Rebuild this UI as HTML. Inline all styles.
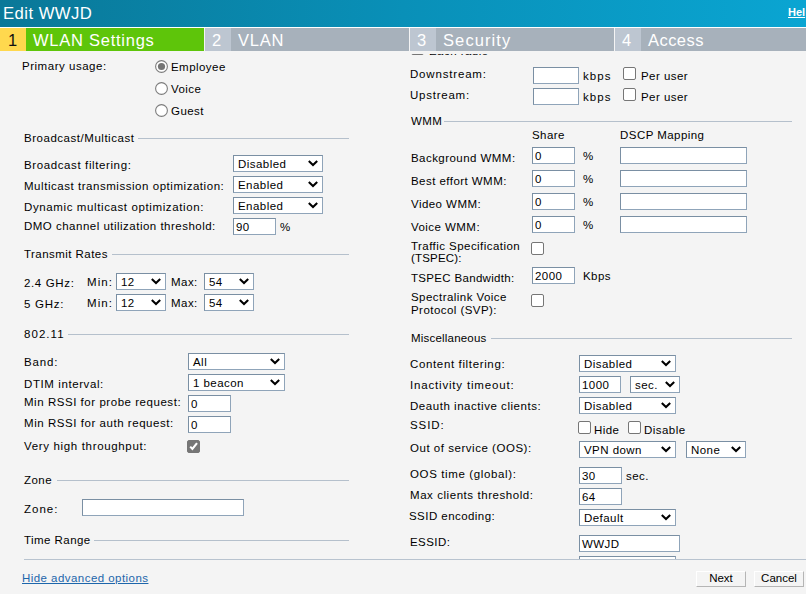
<!DOCTYPE html>
<html><head><meta charset="utf-8"><style>
*{margin:0;padding:0;box-sizing:border-box}
html,body{width:806px;height:594px;overflow:hidden;background:#f4f4f4;font-family:"Liberation Sans",sans-serif}
#hdr{position:absolute;left:0;top:0;width:806px;height:27px;background:linear-gradient(to right,#0a7898 0%,#0990b8 50%,#0aa5d2 100%)}
#hdr .ttl{position:absolute;left:3px;top:3px;font-size:16.7px;letter-spacing:0.45px;line-height:22px;color:#fff}
#hdr .help{position:absolute;left:788px;top:5px;font-size:11px;font-weight:bold;line-height:14px;color:#fff;text-decoration:underline}
#wline{position:absolute;left:0;top:27px;width:806px;height:1px;background:#fff}
.tab{position:absolute;top:28px;height:23px}
.tn{position:absolute;top:0;height:23px;width:26px}
.tl{position:absolute;top:0;height:23px;left:26px}
.tt{position:absolute;font-size:16.5px;letter-spacing:0.75px;line-height:22px;white-space:nowrap;color:#fff}
#content{position:absolute;left:0;top:54px;width:806px;height:505px;overflow:hidden}
#inner{position:absolute;left:0;top:-54px;width:806px;height:594px}
.t{position:absolute;font-size:11.5px;line-height:14px;color:#000;white-space:nowrap;letter-spacing:0.45px}
.sel,.inp{position:absolute;border:1px solid;border-color:#7a8fa3 #8fa4b9 #8fa4b9 #7a8fa3;background:#fff;overflow:hidden}
.sv{position:absolute;left:4px;top:1px;font-size:11.5px;line-height:14px;color:#000;white-space:nowrap;letter-spacing:0.45px}
.iv{position:absolute;left:2px;top:1px;font-size:11.5px;line-height:14px;color:#000;white-space:nowrap;letter-spacing:0.45px}
.chev{position:absolute;right:3px;top:4px}
.cb{position:absolute;width:13px;height:13px;border:1px solid #767676;border-radius:2px;background:#fff}
.cb.on{background:#767676;border-color:#767676}
.cb svg{position:absolute;left:-1px;top:-1px}
.rd{position:absolute}
.hl{position:absolute;height:1px;background:#b5c0cc}
#sep{position:absolute;left:24px;top:559px;width:782px;height:1px;background:#b8c3cf}
#link{position:absolute;left:22px;top:571px;font-size:11.5px;line-height:14px;color:#1d66ab;text-decoration:underline;white-space:nowrap;letter-spacing:0.45px}
.btn{position:absolute;top:571px;height:16px;width:50px;background:#f4f4f4;border:1px solid;border-color:#fff #b5b5b5 #b5b5b5 #fff;font-size:11.5px;line-height:12px;text-align:center;color:#000}
</style></head><body>
<div id="hdr"><div class="ttl">Edit WWJD</div><div class="help">Hel</div></div>
<div id="wline"></div>
<div class="tab" style="left:0;width:204px"><div class="tn" style="background:#ffd84e"><div class="tt" style="left:8px;top:1px;color:#111">1</div></div><div class="tl" style="width:178px;background:#5ec50a"><div class="tt" style="left:7px;top:1px">WLAN Settings</div></div></div>
<div class="tab" style="left:205px;width:204px"><div class="tn" style="background:#bdc6d1"><div class="tt" style="left:7px;top:1px">2</div></div><div class="tl" style="width:178px;background:#a7b1bb"><div class="tt" style="left:7px;top:1px">VLAN</div></div></div>
<div class="tab" style="left:410px;width:204px"><div class="tn" style="background:#bdc6d1"><div class="tt" style="left:7px;top:1px">3</div></div><div class="tl" style="width:178px;background:#a7b1bb"><div class="tt" style="left:7px;top:1px;letter-spacing:1.1px">Security</div></div></div>
<div class="tab" style="left:615px;width:191px"><div class="tn" style="background:#bdc6d1"><div class="tt" style="left:7px;top:1px">4</div></div><div class="tl" style="width:165px;background:#a7b1bb"><div class="tt" style="left:7px;top:1px;letter-spacing:0.45px">Access</div></div></div>
<div id="content"><div id="inner">
<div class="t" style="left:22px;top:59px;letter-spacing:0.52px;">Primary usage:</div>
<svg class="rd" style="left:155px;top:60px" width="13" height="13" viewBox="0 0 13 13"><circle cx="6.5" cy="6.5" r="5.9" fill="#fff" stroke="#7c7c7c" stroke-width="1.1"/><circle cx="6.5" cy="6.5" r="3.6" fill="#747474"/></svg>
<div class="t" style="left:171px;top:60px;">Employee</div>
<svg class="rd" style="left:155px;top:82px" width="13" height="13" viewBox="0 0 13 13"><circle cx="6.5" cy="6.5" r="5.9" fill="#fff" stroke="#7c7c7c" stroke-width="1.1"/></svg>
<div class="t" style="left:171px;top:82px;">Voice</div>
<svg class="rd" style="left:155px;top:104px" width="13" height="13" viewBox="0 0 13 13"><circle cx="6.5" cy="6.5" r="5.9" fill="#fff" stroke="#7c7c7c" stroke-width="1.1"/></svg>
<div class="t" style="left:171px;top:104px;">Guest</div>
<div class="t" style="left:24px;top:131px;letter-spacing:0.53px;">Broadcast/Multicast</div>
<div class="hl" style="left:138px;top:138px;width:211px"></div>
<div class="t" style="left:24px;top:158px;letter-spacing:0.61px;">Broadcast filtering:</div>
<div class="t" style="left:24px;top:179px;letter-spacing:0.54px;">Multicast transmission optimization:</div>
<div class="t" style="left:24px;top:200px;letter-spacing:0.61px;">Dynamic multicast optimization:</div>
<div class="t" style="left:24px;top:219px;letter-spacing:0.49px;">DMO channel utilization threshold:</div>
<div class="sel" style="left:233px;top:155px;width:90px;height:17px"><span class="sv">Disabled</span><svg class="chev" width="12" height="8" viewBox="0 0 12 8"><path d="M1.8 1.1 L6 5 L10.2 1.1" fill="none" stroke="#000" stroke-width="2.1"/></svg></div>
<div class="sel" style="left:233px;top:176px;width:90px;height:17px"><span class="sv">Enabled</span><svg class="chev" width="12" height="8" viewBox="0 0 12 8"><path d="M1.8 1.1 L6 5 L10.2 1.1" fill="none" stroke="#000" stroke-width="2.1"/></svg></div>
<div class="sel" style="left:233px;top:197px;width:90px;height:17px"><span class="sv">Enabled</span><svg class="chev" width="12" height="8" viewBox="0 0 12 8"><path d="M1.8 1.1 L6 5 L10.2 1.1" fill="none" stroke="#000" stroke-width="2.1"/></svg></div>
<div class="inp" style="left:233px;top:218px;width:43px;height:17px"><span class="iv">90</span></div>
<div class="t" style="left:280px;top:220px;">%</div>
<div class="t" style="left:24px;top:247px;">Transmit Rates</div>
<div class="hl" style="left:112px;top:254px;width:237px"></div>
<div class="t" style="left:24px;top:276px;letter-spacing:0.64px;">2.4 GHz:</div>
<div class="t" style="left:24px;top:297px;letter-spacing:0.71px;">5 GHz:</div>
<div class="t" style="left:87px;top:275px;letter-spacing:1.05px;">Min:</div>
<div class="t" style="left:87px;top:296px;letter-spacing:1.05px;">Min:</div>
<div class="t" style="left:171px;top:275px;">Max:</div>
<div class="t" style="left:171px;top:296px;">Max:</div>
<div class="sel" style="left:116px;top:273px;width:50px;height:17px"><span class="sv">12</span><svg class="chev" width="12" height="8" viewBox="0 0 12 8"><path d="M1.8 1.1 L6 5 L10.2 1.1" fill="none" stroke="#000" stroke-width="2.1"/></svg></div>
<div class="sel" style="left:116px;top:294px;width:50px;height:17px"><span class="sv">12</span><svg class="chev" width="12" height="8" viewBox="0 0 12 8"><path d="M1.8 1.1 L6 5 L10.2 1.1" fill="none" stroke="#000" stroke-width="2.1"/></svg></div>
<div class="sel" style="left:204px;top:273px;width:50px;height:17px"><span class="sv">54</span><svg class="chev" width="12" height="8" viewBox="0 0 12 8"><path d="M1.8 1.1 L6 5 L10.2 1.1" fill="none" stroke="#000" stroke-width="2.1"/></svg></div>
<div class="sel" style="left:204px;top:294px;width:50px;height:17px"><span class="sv">54</span><svg class="chev" width="12" height="8" viewBox="0 0 12 8"><path d="M1.8 1.1 L6 5 L10.2 1.1" fill="none" stroke="#000" stroke-width="2.1"/></svg></div>
<div class="t" style="left:24px;top:327px;letter-spacing:1.05px;">802.11</div>
<div class="hl" style="left:68px;top:334px;width:281px"></div>
<div class="t" style="left:24px;top:355px;letter-spacing:0.87px;">Band:</div>
<div class="t" style="left:24px;top:377px;letter-spacing:0.59px;">DTIM interval:</div>
<div class="t" style="left:24px;top:395px;letter-spacing:0.54px;">Min RSSI for probe request:</div>
<div class="t" style="left:24px;top:416px;letter-spacing:0.55px;">Min RSSI for auth request:</div>
<div class="t" style="left:24px;top:439px;letter-spacing:0.66px;">Very high throughput:</div>
<div class="sel" style="left:188px;top:353px;width:97px;height:17px"><span class="sv">All</span><svg class="chev" width="12" height="8" viewBox="0 0 12 8"><path d="M1.8 1.1 L6 5 L10.2 1.1" fill="none" stroke="#000" stroke-width="2.1"/></svg></div>
<div class="sel" style="left:188px;top:374px;width:97px;height:17px"><span class="sv">1 beacon</span><svg class="chev" width="12" height="8" viewBox="0 0 12 8"><path d="M1.8 1.1 L6 5 L10.2 1.1" fill="none" stroke="#000" stroke-width="2.1"/></svg></div>
<div class="inp" style="left:188px;top:395px;width:43px;height:17px"><span class="iv">0</span></div>
<div class="inp" style="left:188px;top:416px;width:43px;height:17px"><span class="iv">0</span></div>
<div class="cb on" style="left:187px;top:440px"><svg width="13" height="13" viewBox="0 0 13 13"><path d="M3.2 6.6 L5.4 9 L10 3.2" fill="none" stroke="#fff" stroke-width="2.1"/></svg></div>
<div class="t" style="left:24px;top:473px;">Zone</div>
<div class="hl" style="left:57px;top:480px;width:292px"></div>
<div class="t" style="left:24px;top:502px;letter-spacing:1.00px;">Zone:</div>
<div class="inp" style="left:82px;top:499px;width:162px;height:17px"><span class="iv"></span></div>
<div class="t" style="left:24px;top:533px;">Time Range</div>
<div class="hl" style="left:94px;top:540px;width:255px"></div>
<div class="cb" style="left:411px;top:42px"></div>
<div class="t" style="left:429px;top:44px;">Each radio</div>
<div class="t" style="left:410px;top:67px;letter-spacing:0.82px;">Downstream:</div>
<div class="t" style="left:410px;top:88px;letter-spacing:0.76px;">Upstream:</div>
<div class="inp" style="left:533px;top:67px;width:46px;height:17px"><span class="iv"></span></div>
<div class="inp" style="left:533px;top:88px;width:46px;height:17px"><span class="iv"></span></div>
<div class="t" style="left:583px;top:69px;letter-spacing:1.05px;">kbps</div>
<div class="t" style="left:583px;top:90px;letter-spacing:1.05px;">kbps</div>
<div class="cb" style="left:623px;top:67px"></div>
<div class="cb" style="left:623px;top:88px"></div>
<div class="t" style="left:641px;top:69px;">Per user</div>
<div class="t" style="left:641px;top:90px;">Per user</div>
<div class="t" style="left:411px;top:114px;">WMM</div>
<div class="hl" style="left:444px;top:121px;width:348px"></div>
<div class="t" style="left:532px;top:128px;">Share</div>
<div class="t" style="left:620px;top:128px;">DSCP Mapping</div>
<div class="t" style="left:411px;top:151px;">Background WMM:</div>
<div class="inp" style="left:532px;top:147px;width:43px;height:17px"><span class="iv">0</span></div>
<div class="t" style="left:583px;top:149px;">%</div>
<div class="inp" style="left:620px;top:147px;width:127px;height:17px"><span class="iv"></span></div>
<div class="t" style="left:411px;top:174px;">Best effort WMM:</div>
<div class="inp" style="left:532px;top:170px;width:43px;height:17px"><span class="iv">0</span></div>
<div class="t" style="left:583px;top:172px;">%</div>
<div class="inp" style="left:620px;top:170px;width:127px;height:17px"><span class="iv"></span></div>
<div class="t" style="left:411px;top:197px;">Video WMM:</div>
<div class="inp" style="left:532px;top:193px;width:43px;height:17px"><span class="iv">0</span></div>
<div class="t" style="left:583px;top:195px;">%</div>
<div class="inp" style="left:620px;top:193px;width:127px;height:17px"><span class="iv"></span></div>
<div class="t" style="left:411px;top:220px;">Voice WMM:</div>
<div class="inp" style="left:532px;top:216px;width:43px;height:17px"><span class="iv">0</span></div>
<div class="t" style="left:583px;top:218px;">%</div>
<div class="inp" style="left:620px;top:216px;width:127px;height:17px"><span class="iv"></span></div>
<div class="t" style="left:411px;top:239px;">Traffic Specification</div>
<div class="t" style="left:411px;top:251px;letter-spacing:0.19px;">(TSPEC):</div>
<div class="cb" style="left:531px;top:242px"></div>
<div class="t" style="left:411px;top:271px;letter-spacing:0.32px;">TSPEC Bandwidth:</div>
<div class="inp" style="left:532px;top:267px;width:43px;height:17px"><span class="iv">2000</span></div>
<div class="t" style="left:583px;top:269px;">Kbps</div>
<div class="t" style="left:411px;top:290px;">Spectralink Voice</div>
<div class="t" style="left:411px;top:303px;">Protocol (SVP):</div>
<div class="cb" style="left:531px;top:294px"></div>
<div class="t" style="left:411px;top:331px;letter-spacing:0.20px;">Miscellaneous</div>
<div class="hl" style="left:491px;top:338px;width:301px"></div>
<div class="t" style="left:410px;top:357px;letter-spacing:0.64px;">Content filtering:</div>
<div class="sel" style="left:579px;top:355px;width:97px;height:17px"><span class="sv">Disabled</span><svg class="chev" width="12" height="8" viewBox="0 0 12 8"><path d="M1.8 1.1 L6 5 L10.2 1.1" fill="none" stroke="#000" stroke-width="2.1"/></svg></div>
<div class="t" style="left:410px;top:378px;letter-spacing:0.82px;">Inactivity timeout:</div>
<div class="inp" style="left:579px;top:376px;width:42px;height:17px"><span class="iv">1000</span></div>
<div class="sel" style="left:630px;top:376px;width:50px;height:17px"><span class="sv">sec.</span><svg class="chev" width="12" height="8" viewBox="0 0 12 8"><path d="M1.8 1.1 L6 5 L10.2 1.1" fill="none" stroke="#000" stroke-width="2.1"/></svg></div>
<div class="t" style="left:410px;top:399px;letter-spacing:0.54px;">Deauth inactive clients:</div>
<div class="sel" style="left:579px;top:397px;width:97px;height:17px"><span class="sv">Disabled</span><svg class="chev" width="12" height="8" viewBox="0 0 12 8"><path d="M1.8 1.1 L6 5 L10.2 1.1" fill="none" stroke="#000" stroke-width="2.1"/></svg></div>
<div class="t" style="left:410px;top:418px;letter-spacing:0.90px;">SSID:</div>
<div class="cb" style="left:578px;top:421px"></div>
<div class="t" style="left:594px;top:423px;">Hide</div>
<div class="cb" style="left:628px;top:421px"></div>
<div class="t" style="left:644px;top:423px;">Disable</div>
<div class="t" style="left:410px;top:441px;letter-spacing:0.53px;">Out of service (OOS):</div>
<div class="sel" style="left:579px;top:441px;width:97px;height:17px"><span class="sv">VPN down</span><svg class="chev" width="12" height="8" viewBox="0 0 12 8"><path d="M1.8 1.1 L6 5 L10.2 1.1" fill="none" stroke="#000" stroke-width="2.1"/></svg></div>
<div class="sel" style="left:686px;top:441px;width:60px;height:17px"><span class="sv">None</span><svg class="chev" width="12" height="8" viewBox="0 0 12 8"><path d="M1.8 1.1 L6 5 L10.2 1.1" fill="none" stroke="#000" stroke-width="2.1"/></svg></div>
<div class="t" style="left:410px;top:467px;letter-spacing:0.63px;">OOS time (global):</div>
<div class="inp" style="left:579px;top:467px;width:43px;height:17px"><span class="iv">30</span></div>
<div class="t" style="left:626px;top:469px;">sec.</div>
<div class="t" style="left:410px;top:488px;letter-spacing:0.56px;">Max clients threshold:</div>
<div class="inp" style="left:579px;top:488px;width:43px;height:17px"><span class="iv">64</span></div>
<div class="t" style="left:409px;top:509px;">SSID encoding:</div>
<div class="sel" style="left:579px;top:509px;width:97px;height:17px"><span class="sv">Default</span><svg class="chev" width="12" height="8" viewBox="0 0 12 8"><path d="M1.8 1.1 L6 5 L10.2 1.1" fill="none" stroke="#000" stroke-width="2.1"/></svg></div>
<div class="t" style="left:410px;top:535px;">ESSID:</div>
<div class="inp" style="left:579px;top:535px;width:101px;height:17px"><span class="iv">WWJD</span></div>
<div class="sel" style="left:579px;top:556px;width:97px;height:17px"><span class="sv"></span><svg class="chev" width="12" height="8" viewBox="0 0 12 8"><path d="M1.8 1.1 L6 5 L10.2 1.1" fill="none" stroke="#000" stroke-width="2.1"/></svg></div>
</div></div>
<div id="sep"></div>
<div id="link">Hide advanced options</div>
<div class="btn" style="left:696px">Next</div>
<div class="btn" style="left:754px">Cancel</div>
</body></html>
